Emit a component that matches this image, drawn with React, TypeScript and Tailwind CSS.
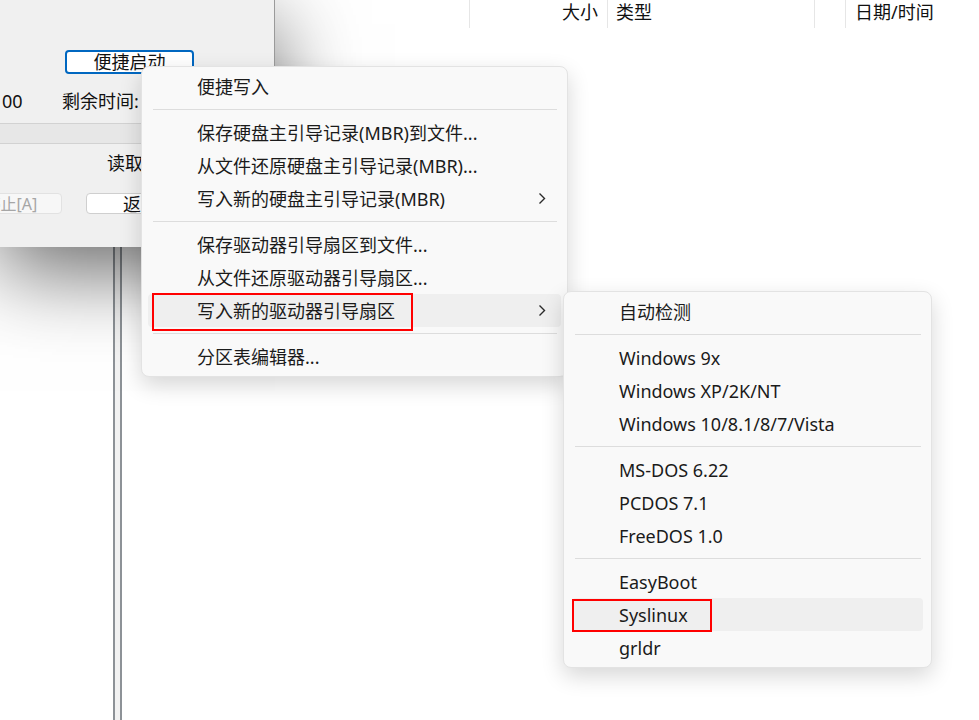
import { ReactNode } from "react";

type Entry = { label: string; arrow?: boolean; hover?: boolean } | "sep";

const mainMenu: Entry[] = [
  { label: "便捷写入" },
  "sep",
  { label: "保存硬盘主引导记录(MBR)到文件..." },
  { label: "从文件还原硬盘主引导记录(MBR)..." },
  { label: "写入新的硬盘主引导记录(MBR)", arrow: true },
  "sep",
  { label: "保存驱动器引导扇区到文件..." },
  { label: "从文件还原驱动器引导扇区..." },
  { label: "写入新的驱动器引导扇区", arrow: true, hover: true },
  "sep",
  { label: "分区表编辑器..." },
];

const subMenu: Entry[] = [
  { label: "自动检测" },
  "sep",
  { label: "Windows 9x" },
  { label: "Windows XP/2K/NT" },
  { label: "Windows 10/8.1/8/7/Vista" },
  "sep",
  { label: "MS-DOS 6.22" },
  { label: "PCDOS 7.1" },
  { label: "FreeDOS 1.0" },
  "sep",
  { label: "EasyBoot" },
  { label: "Syslinux", hover: true },
  { label: "grldr" },
];

function Chevron() {
  return (
    <svg width="8" height="13" viewBox="0 0 8 13" className="shrink-0">
      <path d="M1.5 1.5 L6.5 6.5 L1.5 11.5" fill="none" stroke="#2b2b2b" strokeWidth="1.4" />
    </svg>
  );
}

function MenuList({ items, mx, pl }: { items: Entry[]; mx: string; pl: string }) {
  return (
    <div className="flex flex-col pt-[3px] pb-[3px]">
      {items.map((item, i) =>
        item === "sep" ? (
          <div key={i} className="h-[13px] flex items-center pl-[11px] pr-[10px]">
            <div className="h-px w-full bg-[#dddddd]" />
          </div>
        ) : (
          <div
            key={i}
            className={`h-[33px] flex items-center justify-between rounded-[4px] ${mx} ${pl} pr-[15px] ${item.hover ? "bg-[#efefef]" : ""}`}
          >
            <span className="text-[18px] leading-none text-[#1b1b1b] whitespace-nowrap">{item.label}</span>
            {item.arrow && <Chevron />}
          </div>
        )
      )}
    </div>
  );
}

function Btn({ children, className }: { children: ReactNode; className: string }) {
  return <div className={`flex items-center justify-center rounded-[4px] text-[18px] leading-none ${className}`}>{children}</div>;
}

export default function App() {
  return (
    <div
      className="relative w-[979px] h-[720px] overflow-hidden bg-white"
      style={{ fontFamily: '"Noto Sans", "Noto Sans CJK SC", sans-serif' }}
    >
      {/* main window behind */}
      <div className="flex h-full">
        <div className="w-[113px] bg-white" />
        <div className="w-[9px] border-x-2 border-[#8d9297] bg-[#f2f2f2]" />
        <div className="flex-1 bg-white">
          <div className="flex h-[28px] text-[18px] leading-[24px] text-[#111]">
            <div className="w-[348px] border-r border-[#e6e6e6]" />
            <div className="w-[138px] border-r border-[#e6e6e6] text-right pr-[9px]">大小</div>
            <div className="w-[207px] border-r border-[#e6e6e6] pl-[8px]">类型</div>
            <div className="w-[31px] border-r border-[#e6e6e6]" />
            <div className="pl-[9px] whitespace-nowrap">日期/时间</div>
          </div>
        </div>
      </div>

      {/* dialog window */}
      <div className="absolute left-0 top-0 w-[275px] h-[247px] bg-[#f0f0f0] border-r border-[#9a9a9a] shadow-[0_24px_80px_rgba(0,0,0,0.6)] text-[#111]">
        <div className="flex flex-col">
          <Btn className="mt-[50px] ml-[65px] w-[129px] h-[24px] bg-white border-2 border-[#0067c0]">便捷启动</Btn>
          <div className="mt-[15px] h-[24px] flex items-center text-[18px]">
            <span className="pl-[2px] w-[62px]">00</span>
            <span className="whitespace-nowrap">剩余时间:</span>
          </div>
          <div className="mt-[10px] h-[21px] border-y border-[#d2d2d2] bg-[#e7e7e7]" />
          <div className="mt-[7px] h-[24px] flex items-center pl-[107px] text-[18px] whitespace-nowrap">读取速度:</div>
          <div className="mt-[18px] flex h-[21px]">
            <Btn className="ml-[-40px] w-[102px] border border-[#e2e2e2] bg-[#f7f7f7] text-[#a6a6a6]">
              <span className="whitespace-nowrap text-[16px]">停止[A]</span>
            </Btn>
            <Btn className="ml-[24px] w-[110px] border border-[#cfcfcf] bg-white">返回</Btn>
          </div>
        </div>
      </div>

      {/* context menu */}
      <div className="absolute left-[141px] top-[66px] w-[427px] bg-[#f9f9f9] border border-[#e3e3e3] rounded-[8px] shadow-[0_8px_22px_rgba(0,0,0,0.16)]">
        <MenuList items={mainMenu} mx="mx-[6px]" pl="pl-[49px]" />
      </div>

      {/* submenu */}
      <div className="absolute left-[563px] top-[291px] w-[369px] bg-[#f9f9f9] border border-[#e3e3e3] rounded-[8px] shadow-[0_8px_22px_rgba(0,0,0,0.16)]">
        <MenuList items={subMenu} mx="mx-[8px]" pl="pl-[47px]" />
      </div>

      {/* red highlight boxes */}
      <div className="absolute left-[152px] top-[293px] w-[261px] h-[38px] border-2 border-[#ff0000]" />
      <div className="absolute left-[572px] top-[599px] w-[140px] h-[33px] border-2 border-[#ff0000]" />
    </div>
  );
}
